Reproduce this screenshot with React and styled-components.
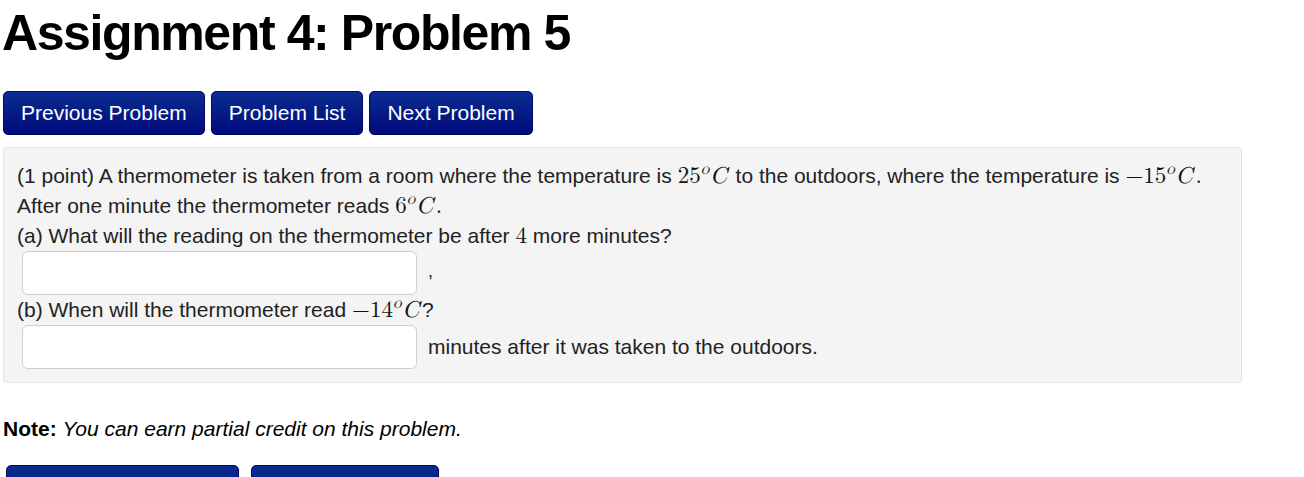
import styled, { createGlobalStyle } from 'styled-components'

const GlobalStyle = createGlobalStyle`
	body {
		margin: 0;
		background: #fff;
		font-family: "Liberation Sans", Arial, sans-serif;
		color: #222;
	}
`

const Page = styled.div`
	padding: 0 2px;
	width: 1240px;
`

const Title = styled.h1`
	margin: 4px 0 0;
	font-size: 50px;
	line-height: 58px;
	font-weight: bold;
	letter-spacing: -1.4px;
	color: #000;
`

const NavBar = styled.div`
	display: flex;
	gap: 6px;
	margin: 29px 0 0 1px;
`

const NavButton = styled.button`
	height: 44px;
	padding: 0 17px;
	border: 1px solid #00065e;
	border-radius: 5px;
	background: linear-gradient(to bottom, #0b2d8f, #000a7c);
	color: #fff;
	font-family: "Liberation Sans", Arial, sans-serif;
	font-size: 21px;
	cursor: pointer;
`

const Panel = styled.div`
	margin: 12px 0 0 1px;
	padding: 13px 13px 13px;
	background: #f4f4f4;
	border: 1px solid #e3e3e3;
	border-radius: 4px;
	font-size: 21px;
	line-height: 30px;
`

const Line = styled.div`
	height: 30px;
	white-space: nowrap;
`

const M = styled.span`
	font-family: "Latin Modern Math", "DejaVu Serif", "Liberation Serif", serif;
	font-size: 23px;
	line-height: 0;
	font-style: ${(p) => (p.$italic ? 'italic' : 'normal')};
	margin-right: ${(p) => (p.$italic ? 3 : 0)}px;
	color: #111;
`

const Sup = styled.span`
	font-family: "Latin Modern Math", "Liberation Serif", serif;
	font-style: italic;
	font-size: 17px;
	line-height: 0;
	vertical-align: 9px;
	margin-right: 1px;
`

const AnswerRow = styled.div`
	display: flex;
	align-items: center;
	gap: 11px;
	margin-left: 5px;
	line-height: 26px;
`

const AnswerBox = styled.input`
	width: 395px;
	height: 44px;
	box-sizing: border-box;
	border: 1px solid #cfcfcf;
	border-radius: 6px;
	background: #fff;
	padding: 0 10px;
	font-size: 18px;
`

const Comma = styled.span`
	font-size: 18px;
	margin-top: -4px;
`

const Note = styled.p`
	margin: 34px 0 0 1px;
	font-size: 21px;
	line-height: 24px;
	color: #000;
	em {
		font-style: italic;
	}
`

const SubmitBar = styled.div`
	display: flex;
	gap: 12px;
	margin: 24px 0 0 4px;
`

const SubmitButton = styled.button`
	width: ${(p) => p.$w}px;
	height: 44px;
	border: 1px solid #00065e;
	border-radius: 5px;
	background: linear-gradient(to bottom, #0b2d8f, #000a7c);
`

const Deg = ({ n, neg }) => (
	<>
		<M>
			{neg ? '\u2212' : ''}
			{n}
		</M>
		<Sup>o</Sup>
		<M $italic>C</M>
	</>
)

const App = () => {
	return (
		<Page>
			<GlobalStyle />
			<Title>Assignment 4: Problem 5</Title>
			<NavBar>
				<NavButton>Previous Problem</NavButton>
				<NavButton>Problem List</NavButton>
				<NavButton>Next Problem</NavButton>
			</NavBar>
			<Panel>
				<Line>
					(1 point) A thermometer is taken from a room where the temperature is <Deg n="25" /> to the
					outdoors, where the temperature is <Deg n="15" neg />
					<M>.</M>
				</Line>
				<Line>
					After one minute the thermometer reads <Deg n="6" />
					<M>.</M>
				</Line>
				<Line>
					(a) What will the reading on the thermometer be after <M>4</M> more minutes?
				</Line>
				<AnswerRow>
					<AnswerBox type="text" />
					<Comma>,</Comma>
				</AnswerRow>
				<Line>
					(b) When will the thermometer read <Deg n="14" neg />?
				</Line>
				<AnswerRow>
					<AnswerBox type="text" />
					<span>minutes after it was taken to the outdoors.</span>
				</AnswerRow>
			</Panel>
			<Note>
				<b>Note:</b> <em>You can earn partial credit on this problem.</em>
			</Note>
			<SubmitBar>
				<SubmitButton $w={233} />
				<SubmitButton $w={188} />
			</SubmitBar>
		</Page>
	)
}

export default App
